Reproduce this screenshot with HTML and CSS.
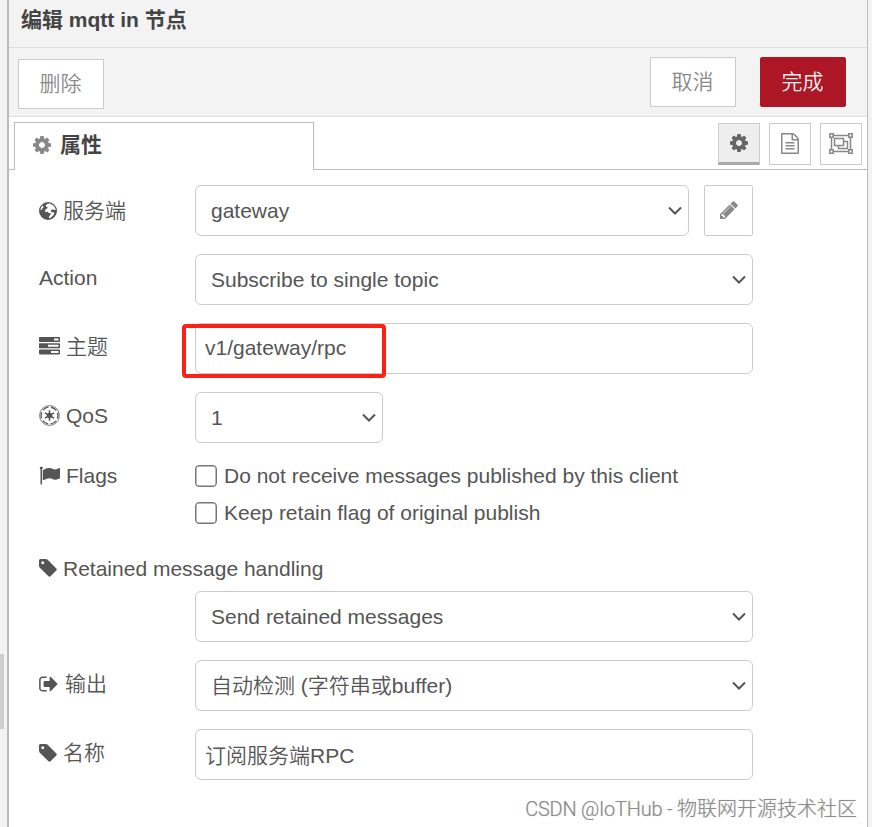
FILE: index.html
```
<!DOCTYPE html>
<html lang="zh-CN">
  <head>
    <meta charset="utf-8" />
    <title>编辑 mqtt in 节点</title>
    <link rel="stylesheet" href="styles.css">
  </head>
  <body>
    <svg class="sprite">
      <symbol id="cog" viewBox="128 128 1536 1536">
        <path d="M1152 896q0-106-75-181t-181-75-181 75-75 181 75 181 181 75 181-75 75-181zm512-109v222q0 12-8 23t-20 13l-185 28q-19 54-39 91 35 50 107 138 10 12 10 25t-9 23q-27 37-99 108t-94 71q-12 0-26-9l-138-108q-44 23-91 38-16 136-29 186-7 28-36 28h-222q-14 0-24.5-8.5t-11.5-21.5l-28-184q-49-16-90-37l-141 107q-10 9-25 9-14 0-25-11-126-114-165-168-7-10-7-23 0-12 8-23 15-21 51-66.5t54-70.5q-27-50-41-99l-183-27q-13-2-21-12.5t-8-23.5v-222q0-12 8-23t19-13l186-28q14-46 39-92-40-57-107-138-10-12-10-24 0-10 9-23 26-36 98.5-107.5t94.5-71.5q13 0 26 10l138 107q44-23 91-38 16-136 29-186 7-28 36-28h222q14 0 24.5 8.5t11.5 21.5l28 184q49 16 90 37l142-107q9-9 24-9 13 0 25 10 129 119 165 170 7 8 7 22 0 12-8 23-15 21-51 66.5t-54 70.5q26 50 41 98l183 28q13 2 21 12.5t8 23.5z" />
      </symbol>
      <symbol id="file" viewBox="128 0 1536 1792">
        <path d="M1596 380q28 28 48 76t20 88v1152q0 40-28 68t-68 28h-1344q-40 0-68-28t-28-68v-1600q0-40 28-68t68-28h896q40 0 88 20t76 48zm-444-244v376h376q-10-29-22-41l-313-313q-12-12-41-22zm384 1528v-1024h-416q-40 0-68-28t-28-68v-416h-768v1536h1280zm-1024-864q0-14 9-23t23-9h704q14 0 23 9t9 23v64q0 14-9 23t-23 9h-704q-14 0-23-9t-9-23v-64zm736 224q14 0 23 9t9 23v64q0 14-9 23t-23 9h-704q-14 0-23-9t-9-23v-64q0-14 9-23t23-9h704zm0 256q14 0 23 9t9 23v64q0 14-9 23t-23 9h-704q-14 0-23-9t-9-23v-64q0-14 9-23t23-9h704z" />
      </symbol>
      <symbol id="group" viewBox="0 0 24 21">
        <g fill="none" stroke="currentColor" stroke-width="1.5">
          <path d="M4 2.5h16M4 18.5h16M2.5 4v13M21.5 4v13" />
          <path d="M.8.8h3.4v3.4H.8zM19.8.8h3.4v3.4h-3.4zM.8 16.8h3.4v3.4H.8zM19.8 16.8h3.4v3.4h-3.4z" />
          <path d="M5.5 5.5h9v7h-9zM14.5 8.5h4v7h-9v-3" />
        </g>
      </symbol>
      <symbol id="globe" viewBox="0 0 18 18">
        <path fill-rule="evenodd" d="M9 0a9 9 0 1 1 0 18A9 9 0 0 1 9 0zM11 1.400l-2.500.4-1.800 1.700.4 1.300 1.500.1-.2 1.300-1.900 1.300-.8 1.500 1.200 1 1.600-.2 1.300 1.100 1.700.3.3 1.400-1.500 1.500-.5 2.100 2-.5 1.200-1.300 1.600-1.300.7-2-1.100-1-1.700.1-.8-1.300.8-1.200 1.800-.2 1.500.6 1-.3-.8-2.100-1.500-2.200zM3.900 3.200L2.200 5.200l-.8 2.600.7.4 1.100-1.500 1.300-1.500z" />
      </symbol>
      <symbol id="tasks" viewBox="0 0 21 18">
        <path fill-rule="evenodd" d="M.8 0h19.400q.8 0 .8.8v3.400q0 .8-.8.8H.8Q0 5 0 4.200V.8Q0 0 .8 0zM15 1.500v2h4.500v-2zM.8 6.200h19.400q.8 0 .8.8v3.400q0 .8-.8.8H.8q-.8 0-.8-.8V7q0-.8.8-.8zM9 7.700v2h10.500v-2zM.8 12.400h19.400q.8 0 .8.8v3.400q0 .8-.8.8H.8q-.8 0-.8-.8v-3.400q0-.8.8-.8zM12 13.900v2h7.500v-2z" />
      </symbol>
      <symbol id="empire" viewBox="0 0 21 21">
        <circle cx="10.500" cy="10.500" r="9.900" fill="none" stroke="currentColor" stroke-width=".8" />
        <circle cx="10.500" cy="10.500" r="8.400" fill="none" stroke="currentColor" stroke-width="1.300" stroke-dasharray="6.200 2.596" stroke-dashoffset="3.100" />
        <circle cx="10.500" cy="10.500" r="2.800" />
        <path stroke="currentColor" stroke-width="1.500" d="M10.500 5.200v10.600M5.900 7.850l9.200 5.300M15.100 7.850l-9.200 5.300" />
      </symbol>
      <symbol id="flag" viewBox="0 0 1792 1792">
        <path d="M320 256q0 72-64 110v1266q0 13-9.500 22.500t-22.500 9.500h-64q-13 0-22.500-9.500t-9.500-22.500v-1266q-64-38-64-110 0-53 37.500-90.500t90.500-37.500 90.500 37.500 37.500 90.500zm1472 64v763q0 25-12.500 38.500t-39.500 27.500q-215 116-369 116-61 0-123.500-22t-108.500-48-115.500-48-142.500-22q-192 0-464 146-17 9-33 9-26 0-45-19t-19-45v-742q0-32 31-55 21-14 79-43 236-120 421-120 107 0 200 29t219 88q38 19 88 19 54 0 117.500-21t110-47 88-47 54.500-21q26 0 45 19t19 45z" />
      </symbol>
      <symbol id="tag" viewBox="128 128 1536 1536">
        <path d="M576 448q0-53-37.500-90.500t-90.500-37.500-90.500 37.500-37.500 90.500 37.500 90.500 90.500 37.500 90.500-37.500 37.500-90.500zm1067 576q0 53-37 90l-491 492q-39 37-91 37-53 0-90-37l-715-716q-38-37-64.500-101t-26.500-117v-416q0-52 38-90t90-38h416q53 0 117 26.500t102 64.500l715 714q37 39 37 91z" />
      </symbol>
      <symbol id="sign-out" viewBox="64 128 1600 1536">
        <path d="M704 1440q0 4 1 20t.5 26.500-3 23.500-10 19.500-20.500 6.500h-320q-119 0-203.500-84.500t-84.500-203.500v-704q0-119 84.500-203.500t203.500-84.500h320q13 0 22.500 9.500t9.500 22.500q0 4 1 20t.5 26.500-3 23.500-10 19.500-20.500 6.500h-320q-66 0-113 47t-47 113v704q0 66 47 113t113 47h312l11.500 1 11.500 3 8 5.500 7 9 2 13.500zm928-544q0 26-19 45l-544 544q-19 19-45 19t-45-19-19-45v-288h-448q-26 0-45-19t-19-45v-384q0-26 19-45t45-19h448v-288q0-26 19-45t45-19 45 19l544 544q19 19 19 45z" />
      </symbol>
      <symbol id="pencil" viewBox="128 128 1536 1536">
        <path d="M491 1536l91-91-235-235-91 91v107h128v128h107zm523-928q0-22-22-22-10 0-17 7l-542 542q-7 7-7 17 0 22 22 22 10 0 17-7l542-542q7-7 7-17zm-54-192l416 416-832 832h-416v-416zm683 96q0 53-37 90l-166 166-416-416 166-165q36-38 90-38 53 0 91 38l235 234q37 39 37 91z" />
      </symbol>
      <symbol id="chevron" viewBox="0 0 14 9">
        <path d="M1 1.500l6 6 6-6" fill="none" stroke="currentColor" stroke-width="2" />
      </symbol>
    </svg>

    <div class="workspace-edge"><div class="scroll-thumb"></div></div>

    <div class="tray">
      <div class="tray-header">编辑 mqtt in 节点</div>
      <div class="tray-toolbar">
        <button type="button" class="btn btn-delete">删除</button>
        <button type="button" class="btn">取消</button>
        <button type="button" class="btn primary">完成</button>
      </div>

      <div class="tabs">
        <div class="tab"><svg class="icon"><use href="#cog" /></svg>属性</div>
        <div class="tab-buttons">
          <button type="button" class="selected"><svg class="icon"><use href="#cog" /></svg></button>
          <button type="button"><svg class="icon file"><use href="#file" /></svg></button>
          <button type="button"><svg class="icon group"><use href="#group" /></svg></button>
        </div>
      </div>

      <form class="form">
        <div class="row server">
          <label><svg class="icon"><use href="#globe" /></svg>服务端</label>
          <div class="select">
            <select><option>gateway</option></select>
            <svg class="chevron"><use href="#chevron" /></svg>
          </div>
          <button type="button" class="edit"><svg class="icon"><use href="#pencil" /></svg></button>
        </div>
        <div class="row">
          <label>Action</label>
          <div class="select">
            <select><option>Subscribe to single topic</option></select>
            <svg class="chevron"><use href="#chevron" /></svg>
          </div>
        </div>
        <div class="row">
          <label><svg class="icon tasks"><use href="#tasks" /></svg>主题</label>
          <div class="topic">
            <input type="text" value="v1/gateway/rpc">
            <div class="highlight"></div>
          </div>
        </div>
        <div class="row">
          <label><svg class="icon wide"><use href="#empire" /></svg>QoS</label>
          <div class="select small">
            <select><option>1</option></select>
            <svg class="chevron"><use href="#chevron" /></svg>
          </div>
        </div>
        <div class="row flags">
          <label><svg class="icon wide"><use href="#flag" /></svg>Flags</label>
          <div class="checks">
            <label><input type="checkbox">Do not receive messages published by this client</label>
            <label><input type="checkbox">Keep retain flag of original publish</label>
          </div>
        </div>
        <div class="row stacked">
          <label><svg class="icon"><use href="#tag" /></svg>Retained message handling</label>
          <div class="select">
            <select><option>Send retained messages</option></select>
            <svg class="chevron"><use href="#chevron" /></svg>
          </div>
        </div>
        <div class="row">
          <label><svg class="icon out"><use href="#sign-out" /></svg>输出</label>
          <div class="select">
            <select><option>自动检测 (字符串或buffer)</option></select>
            <svg class="chevron"><use href="#chevron" /></svg>
          </div>
        </div>
        <div class="row">
          <label><svg class="icon"><use href="#tag" /></svg>名称</label>
          <input type="text" value="订阅服务端RPC">
        </div>
      </form>
    </div>

    <div class="watermark"><span>CSDN @IoTHub - </span>物联网开源技术社区</div>
  </body>
</html>
```
FILE: styles.css
```
* {
  box-sizing: border-box;
}

body {
  margin: 0;
  height: 827px;
  display: flex;
  overflow: hidden;
  background: #f3f3f3;
  color: #555;
  font: 21px/30px "Liberation Sans", "Noto Sans CJK SC", sans-serif;
  font-weight: 350;
}

button,
input,
select {
  margin: 0;
  font: inherit;
  color: inherit;
}

.sprite {
  display: none;
}

.icon {
  flex: none;
  width: 18px;
  height: 18px;
  fill: currentColor;
}

.workspace-edge {
  width: 7px;
  padding-top: 654px;
}

.scroll-thumb {
  width: 4px;
  height: 75px;
  background: #cdcdcd;
}

.tray {
  width: 861px;
  border-left: 2px solid #bbb;
  border-right: 1px solid #bbb;
  background: #fff;
}

.tray-header {
  height: 48px;
  padding: 5px 12px;
  border-bottom: 1px solid #ddd;
  background: #f3f3f3;
  color: #444;
  font-weight: bold;
}

.tray-toolbar {
  display: flex;
  align-items: flex-start;
  height: 69px;
  padding: 9px 21px 0 9px;
  border-bottom: 1px solid #ddd;
  background: #f3f3f3;
}

.btn {
  width: 86px;
  height: 50px;
  padding: 0 1px 0 0;
  border: 1px solid #ccc;
  background: #fff;
  color: #888;
}

.btn + .btn {
  margin-left: 24px;
}

.btn-delete {
  margin: 2px auto 0 0;
}

.btn.primary {
  border-color: #ad1625;
  border-radius: 2px;
  background: #ad1625;
  color: #eee;
}

.tabs {
  display: flex;
  justify-content: space-between;
  height: 53px;
  padding: 5px 5px 0;
  background: linear-gradient(#bbb, #bbb) bottom / 100% 1px no-repeat;
}

.tab {
  display: flex;
  align-items: center;
  width: 300px;
  padding: 0 18px 4px;
  border: 1px solid #bbb;
  border-bottom: none;
  background: #fff;
  color: #444;
  font-weight: bold;
}

.tab .icon {
  margin-right: 9px;
  color: #888;
}

.tab-buttons {
  display: flex;
  gap: 9px;
  padding-top: 1px;
}

.tab-buttons button {
  display: flex;
  align-items: center;
  justify-content: center;
  width: 42px;
  height: 42px;
  padding: 0;
  border: 1px solid #ccc;
  background: #fff;
  color: #888;
}

.tab-buttons .selected {
  border-bottom: 3px solid #aaa;
  background: #eee;
  color: #666;
}

.icon.file {
  height: 21px;
  margin-bottom: 2px;
}

.icon.group {
  width: 24px;
  height: 21px;
  margin-bottom: 1px;
}

.form {
  padding: 15px 114px 0 30px;
}

.row {
  display: flex;
  height: 51px;
  margin-bottom: 18px;
}

.row > label {
  display: flex;
  align-items: center;
  flex: none;
  width: 156px;
  height: 48px;
}

.row.server > label {
  height: 52px;
}

.row > label .icon {
  margin-right: 6px;
}

.icon.wide,
.icon.tasks {
  width: 21px;
}

.icon.wide {
  height: 21px;
}

.row > label .icon.tasks,
.row > label .icon.wide {
  margin-bottom: 2px;
}

.row > label .icon.out {
  width: 19px;
  margin-right: 7px;
}

.select,
.topic {
  position: relative;
  flex: 1;
}

.select.small {
  flex: none;
  width: 188px;
}

select,
input[type="text"] {
  display: block;
  width: 100%;
  height: 51px;
  padding: 0 9px 1px;
  border: 1px solid #ccc;
  border-radius: 6px;
  background: #fff;
}

select {
  appearance: none;
  padding: 0 15px;
}

.chevron {
  position: absolute;
  top: 21px;
  right: 7px;
  width: 14px;
  height: 9px;
}

.edit {
  width: 49px;
  height: 51px;
  margin-left: 15px;
  padding: 2px 0 0;
  border: 1px solid #ccc;
  border-radius: 2px;
  background: #fff;
  color: #888;
}

/* red frame over the topic value */
.highlight {
  position: absolute;
  top: 1px;
  left: -13px;
  width: 204px;
  height: 54px;
  border: 4px solid #fd2015;
  border-radius: 4px;
}

.row.flags {
  height: 76px;
  margin-bottom: 10px;
}

.row.flags > label {
  height: 30px;
}

.checks label {
  display: flex;
  align-items: center;
  height: 30px;
  margin-bottom: 7px;
}

.checks input {
  appearance: none;
  width: 22px;
  height: 22px;
  margin-right: 7px;
  border: 1px solid #767676;
  border-radius: 4px;
  background: #fff;
  box-shadow: inset 0 0 0 0.5px #767676;
}

.row.stacked {
  flex-direction: column;
  height: 95px;
}

.row.stacked > label {
  width: auto;
  height: 44px;
}

.row.stacked > label .icon {
  margin-bottom: 2px;
}

.row.stacked .select {
  margin-left: 156px;
}

.watermark {
  position: absolute;
  right: 15px;
  bottom: 3px;
  color: #8c8c8c;
  font: 20px/30px Roboto, "Noto Sans CJK SC", sans-serif;
  font-weight: 300;
  text-shadow: 0 0 1px #bbb;
}

.watermark span {
  letter-spacing: -0.25px;
}
```
